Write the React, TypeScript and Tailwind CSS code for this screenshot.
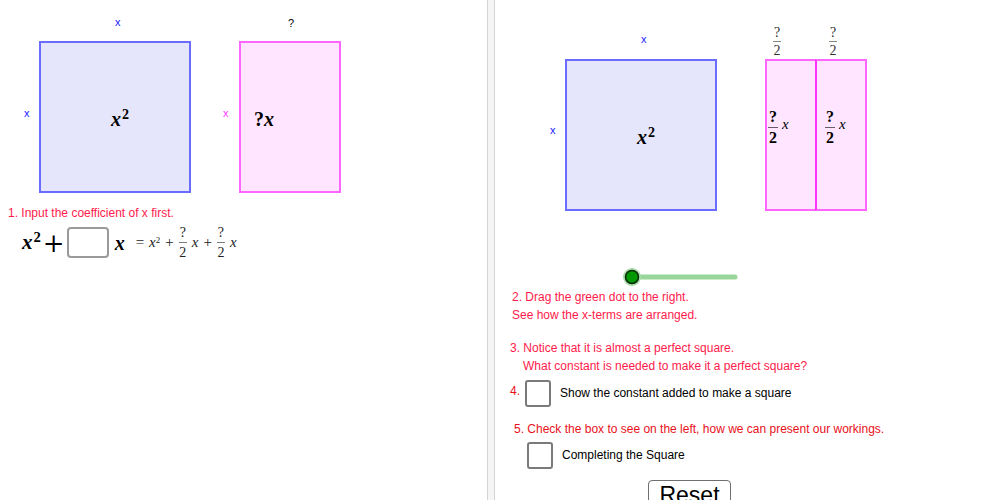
import React from "react";

const mathFont = { fontFamily: '"DejaVu Serif", "Liberation Serif", serif' };
const timesFont = { fontFamily: '"Liberation Serif", serif' };

function Frac({ cls = "", bold = false, size = "text-[12px]", lh = "leading-[11px]", bar = "w-[8px]", gap = "my-[2px]" }: { cls?: string; bold?: boolean; size?: string; lh?: string; bar?: string; gap?: string }) {
  return (
    <span className={`inline-flex flex-col items-center leading-none ${size} ${bold ? "font-bold" : ""} ${cls}`} style={timesFont}>
      <span className={lh}>?</span>
      <span className={`block h-px ${bar} bg-current opacity-60 ${gap}`} />
      <span className={lh}>2</span>
    </span>
  );
}

function XSq({ size = "text-[20px]" }: { size?: string }) {
  return (
    <span className={`${size} font-bold italic leading-none text-black`} style={timesFont}>
      x<sup className="not-italic text-[0.7em] ml-[1px]">2</sup>
    </span>
  );
}

function Checkbox() {
  return <span className="block w-[26px] h-[27px] rounded-[3px] border-2 border-[#7a7a7a] bg-white" />;
}

export default function App() {
  const red = "text-[#ff1a4b]";
  const red2 = "text-[#e8101a]";
  return (
    <div className="flex w-[1000px] h-[500px] bg-white overflow-hidden" style={{ fontFamily: '"Liberation Sans", Arial, sans-serif' }}>
      {/* LEFT PANEL */}
      <div className="w-[487px] h-full flex flex-col">
        <div className="relative h-[205px] shrink-0">
          <span className="absolute left-[115px] top-[14px] text-[11px] text-[#2020ff]">x</span>
          <span className="absolute left-[24px] top-[105px] text-[11px] text-[#2020ff]">x</span>
          <div className="absolute left-[39px] top-[41px] w-[152px] h-[152px] border-2 border-[#6b6bff] bg-[#e5e5fb] flex items-center justify-center">
            <span className="ml-[10px] mt-[8px]"><XSq /></span>
          </div>
          <span className="absolute left-[288px] top-[15px] text-[11px] text-black">?</span>
          <span className="absolute left-[223px] top-[105px] text-[11px] text-[#ff33ff]">x</span>
          <div className="absolute left-[239px] top-[41px] w-[102px] h-[152px] border-2 border-[#ff66ff] bg-[#ffe5ff] flex items-center">
            <span className="ml-[13px] mb-[-4px] text-[20px] font-bold italic text-black" style={timesFont}>
              <span className="not-italic">?</span>x
            </span>
          </div>
        </div>
        <p className={`ml-[8px] text-[12px] leading-[16px] ${red}`}>1. Input the coefficient of x first.</p>
        <div className="flex items-center ml-[22px] mt-[6px] h-[31px]">
          <XSq size="text-[21px]" />
          <span className="ml-[2px] text-[26px] leading-none text-black" style={mathFont}>+</span>
          <span className="ml-[2px] block w-[42px] h-[31px] rounded-[4px] border-2 border-[#9a9a9a] bg-white" />
          <span className="ml-[6px] text-[20px] font-bold italic text-black" style={timesFont}>x</span>
          <span className="ml-[11px] flex items-center gap-[5px] text-[15px] text-[#222]" style={timesFont}>
            <span>=</span>
            <span className="italic">x<sup className="not-italic text-[9px]">2</sup></span>
            <span>+</span>
            <Frac size="text-[14px]" lh="leading-[13px]" gap="my-[3px]" />
            <span className="italic">x</span>
            <span>+</span>
            <Frac size="text-[14px]" lh="leading-[13px]" gap="my-[3px]" />
            <span className="italic">x</span>
          </span>
        </div>
      </div>

      {/* DIVIDER */}
      <div className="w-[8px] h-full bg-[#f5f5f5] border-x border-[#d4d4d4] shrink-0" />

      {/* RIGHT PANEL */}
      <div className="flex-1 h-full flex flex-col">
        <div className="relative h-[266px] shrink-0">
          <span className="absolute left-[146px] top-[31px] text-[11px] text-[#2020ff]">x</span>
          <span className="absolute left-[55px] top-[122px] text-[11px] text-[#2020ff]">x</span>
          <div className="absolute left-[70px] top-[59px] w-[152px] h-[152px] border-2 border-[#6b6bff] bg-[#e5e5fb] flex items-center justify-center">
            <span className="ml-[10px] mt-[8px]"><XSq /></span>
          </div>
          <span className="absolute left-[278px] top-[26px] flex text-[#333]"><Frac size="text-[14px]" lh="leading-[13px]" /></span>
          <span className="absolute left-[334px] top-[26px] flex text-[#333]"><Frac size="text-[14px]" lh="leading-[13px]" /></span>
          <div className="absolute left-[270px] top-[59px] h-[152px] flex">
            <div className="w-[52px] h-full border-2 border-[#ff66ff] bg-[#ffe5ff] flex items-center">
              <span className="ml-[1px] mb-[15px] flex items-center gap-[4px]">
                <Frac bold size="text-[16px]" lh="leading-[14px]" bar="w-[10px]" gap="my-[3px]" cls="text-black" />
                <span className="italic text-[15px] mb-[7px]" style={timesFont}>x</span>
              </span>
            </div>
            <div className="w-[52px] h-full border-2 border-[#ff66ff] border-l-[#ff33ff] bg-[#ffe5ff] flex items-center -ml-[2px]">
              <span className="ml-[8px] mb-[15px] flex items-center gap-[4px]">
                <Frac bold size="text-[16px]" lh="leading-[14px]" bar="w-[10px]" gap="my-[3px]" cls="text-black" />
                <span className="italic text-[15px] mb-[7px]" style={timesFont}>x</span>
              </span>
            </div>
          </div>
        </div>

        <svg className="ml-[125px] shrink-0" width="125" height="22" viewBox="0 0 125 22">
          <line x1="12" y1="11" x2="115" y2="11" stroke="#99d699" strokeWidth="5" strokeLinecap="round" />
          <circle cx="12" cy="11" r="9" fill="#a8dca8" />
          <circle cx="12" cy="11" r="6.5" fill="#009900" stroke="#0a2a0a" strokeWidth="1.5" />
        </svg>

        <p className={`ml-[17px] text-[12px] leading-[18px] ${red}`}>2. Drag the green dot to the right.</p>
        <p className={`ml-[17px] text-[12px] leading-[18px] ${red}`}>See how the x-terms are arranged.</p>
        <p className={`ml-[15px] mt-[15px] text-[12px] leading-[18px] ${red}`}>3. Notice that it is almost a perfect square.</p>
        <p className={`ml-[28px] text-[12px] leading-[18px] ${red}`}>What constant is needed to make it a perfect square?</p>

        <div className="flex items-start ml-[15px] mt-[5px]">
          <span className={`text-[12px] leading-[18px] mt-[2px] ${red2}`}>4.</span>
          <span className="ml-[5px]"><Checkbox /></span>
          <span className="ml-[9px] mt-[4px] text-[12px] leading-[18px] text-black">Show the constant added to make a square</span>
        </div>

        <p className={`ml-[19px] mt-[13px] text-[12px] leading-[18px] ${red2}`}>5. Check the box to see on the left, how we can present our workings.</p>

        <div className="flex items-start ml-[32px] mt-[4px]">
          <Checkbox />
          <span className="ml-[9px] mt-[4px] text-[12px] leading-[18px] text-black">Completing the Square</span>
        </div>

        <div className="ml-[153px] mt-[11px] w-[83px] h-[32px] shrink-0 rounded-[4px] border border-[#6f6f6f] bg-white flex justify-center">
          <span className="text-[23px] leading-none mt-[3px] text-black">Reset</span>
        </div>
      </div>
    </div>
  );
}
